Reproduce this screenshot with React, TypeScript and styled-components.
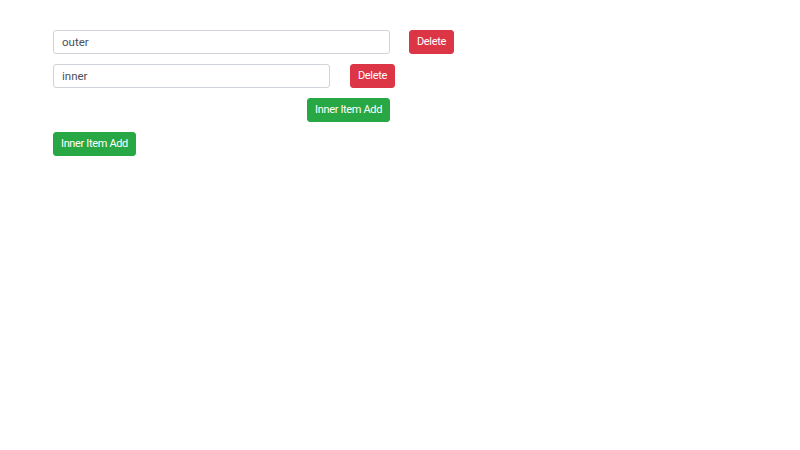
import React, {useState} from 'react';
import styled, {createGlobalStyle} from 'styled-components';

const GlobalStyle = createGlobalStyle`
  body {
    margin: 0;
    background: #fff;
    font-family: Roboto, "Noto Sans", sans-serif;
  }
`;

const Page = styled.div`
  padding: 30px 0 0 53px;
  display: flex;
  flex-direction: column;
  gap: 10px;
  align-items: flex-start;
`;

const Group = styled.div<{ $width: number }>`
  width: ${p => p.$width}px;
  display: flex;
  flex-direction: column;
  gap: 10px;
  align-items: flex-end;
`;

const Row = styled.div<{ $gap: number }>`
  align-self: stretch;
  display: flex;
  align-items: center;
  gap: ${p => p.$gap}px;
`;

const Input = styled.input<{ $width: number }>`
  box-sizing: border-box;
  width: ${p => p.$width}px;
  flex: none;
  height: 24px;
  padding: 0 8px;
  font-family: inherit;
  font-size: 11.5px;
  color: #495057;
  border: 1px solid #ced4da;
  border-radius: 3px;
  outline: none;
`;

const Button = styled.button<{ $variant: 'danger' | 'success' }>`
  box-sizing: border-box;
  height: 24px;
  padding: 0 7px;
  font-family: inherit;
  font-size: 11px;
  letter-spacing: -0.35px;
  line-height: 22px;
  color: #fff;
  border: 1px solid ${p => (p.$variant === 'danger' ? '#dc3545' : '#28a745')};
  background: ${p => (p.$variant === 'danger' ? '#dc3545' : '#28a745')};
  border-radius: 3px;
  cursor: pointer;
  white-space: nowrap;
`;

export default function App() {
    const [outer, setOuter] = useState('outer');
    const [inner, setInner] = useState('inner');

    return (
        <>
            <GlobalStyle/>
            <Page>
                <Row $gap={19}>
                    <Input $width={337} value={outer} onChange={e => setOuter(e.target.value)}/>
                    <Button $variant="danger">Delete</Button>
                </Row>
                <Group $width={337}>
                    <Row $gap={20}>
                        <Input $width={277} value={inner} onChange={e => setInner(e.target.value)}/>
                        <Button $variant="danger">Delete</Button>
                    </Row>
                    <Button $variant="success">Inner Item Add</Button>
                </Group>
                <Button $variant="success">Inner Item Add</Button>
            </Page>
        </>
    );
}
